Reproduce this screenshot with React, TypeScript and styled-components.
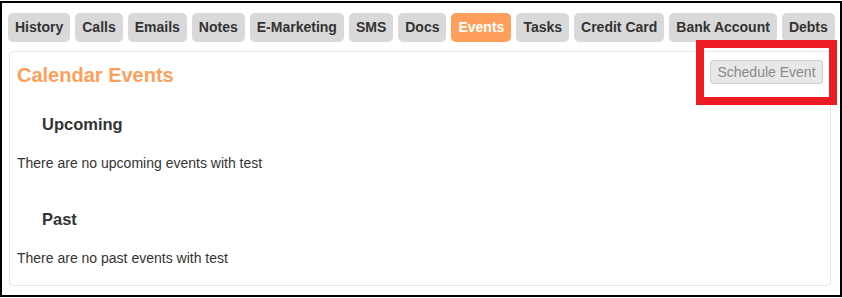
import React from 'react'
import styled, { createGlobalStyle } from 'styled-components'

const GlobalStyle = createGlobalStyle`
  html, body {
    margin: 0;
    padding: 0;
    background: #fff;
  }
  body {
    font-family: "Liberation Sans", Arial, sans-serif;
    color: #333;
  }
`

const accent = '#ff9f5c'

const Frame = styled.div`
  position: relative;
  box-sizing: border-box;
  width: 842px;
  height: 296px;
  margin-top: 1px;
  border: 2px solid #000;
  padding: 10px 9px 0 6px;
`

const TabBar = styled.nav`
  display: flex;
  gap: 5px;
  padding-right: 1px;
`

const Tab = styled.button<{ active?: boolean }>`
  box-sizing: border-box;
  height: 29px;
  padding: 0 7px;
  border: 0;
  border-radius: 5px;
  background: ${({ active }) => (active ? accent : '#d9d9d9')};
  color: ${({ active }) => (active ? '#fff' : '#333')};
  font-family: "Liberation Sans", Arial, sans-serif;
  font-size: 14px;
  font-weight: bold;
  line-height: 29px;
  white-space: nowrap;
  cursor: pointer;
`

const Panel = styled.section`
  box-sizing: border-box;
  margin: 9px 0 0 1px;
  height: 235px;
  border: 1px solid #e6e6e6;
  border-radius: 4px;
  padding: 8px 7px 0 7px;
`

const PanelHeader = styled.div`
  display: flex;
  justify-content: space-between;
  align-items: flex-start;
`

const Title = styled.h1`
  margin: 4px 0 0;
  font-size: 20px;
  line-height: 23px;
  font-weight: bold;
  color: ${accent};
`

const ScheduleButton = styled.button`
  box-sizing: border-box;
  height: 24px;
  width: 113px;
  padding: 0;
  border: 1px solid #cfcfcf;
  border-radius: 3px;
  background: #e8e8e8;
  color: #8a8a8a;
  font-family: "Liberation Sans", Arial, sans-serif;
  font-size: 14px;
  line-height: 22px;
`

const SectionTitle = styled.h3<{ gap: number }>`
  margin: ${({ gap }) => gap}px 0 0 25px;
  font-size: 16.5px;
  line-height: 19px;
  font-weight: bold;
  color: #333;
`

const Empty = styled.p`
  margin: 21px 0 0;
  font-size: 14px;
  line-height: 16px;
  color: #333;
`

const Highlight = styled.div`
  position: absolute;
  left: 694px;
  top: 37px;
  width: 141px;
  height: 65px;
  box-sizing: border-box;
  border: 8px solid #ed1c24;
  pointer-events: none;
`

const tabs = [
  'History',
  'Calls',
  'Emails',
  'Notes',
  'E-Marketing',
  'SMS',
  'Docs',
  'Events',
  'Tasks',
  'Credit Card',
  'Bank Account',
  'Debts',
]

export default function App() {
  return (
    <>
      <GlobalStyle />
      <Frame>
        <TabBar>
          {tabs.map((t) => (
            <Tab key={t} active={t === 'Events'}>
              {t}
            </Tab>
          ))}
        </TabBar>
        <Panel>
          <PanelHeader>
            <Title>Calendar Events</Title>
            <ScheduleButton>Schedule Event</ScheduleButton>
          </PanelHeader>
          <SectionTitle gap={28}>Upcoming</SectionTitle>
          <Empty>There are no upcoming events with test</Empty>
          <SectionTitle gap={39}>Past</SectionTitle>
          <Empty>There are no past events with test</Empty>
        </Panel>
        <Highlight />
      </Frame>
    </>
  )
}
